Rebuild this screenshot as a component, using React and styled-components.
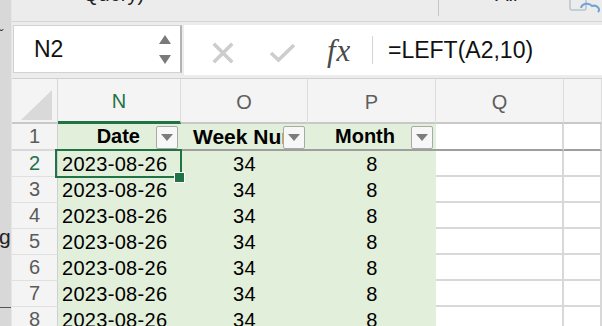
import styled, { createGlobalStyle } from "styled-components";

const GlobalStyle = createGlobalStyle`
  html, body {
    margin: 0;
    padding: 0;
    background: #ececec;
    overflow: hidden;
  }
  body {
    font-family: "Liberation Sans", Arial, sans-serif;
  }
`;

const COLS = "46px 123px 127px 128px 128px 1fr";
const GREEN = "#217346";
const TABLE_FILL = "#e2efda";

const rows = [2, 3, 4, 5, 6, 7, 8].map((n) => ({
  n,
  date: "2023-08-26",
  week: 34,
  month: 8,
}));

export default function App() {
  return (
    <>
      <GlobalStyle />
      <Window>
        <SideStrip>
          <Tick>ˇ</Tick>
          <SideGlyph>g</SideGlyph>
          <SideRule />
        </SideStrip>
        <Main>
          <Ribbon>
            <RibbonLabel $left={71}>Query)</RibbonLabel>
            <RibbonDivider />
            <RibbonLabel $left={56}>All</RibbonLabel>
            <RibbonIcon>
              <svg width="32" height="14" viewBox="0 0 32 14">
                <rect x="1" y="-6" width="16" height="16" rx="2" fill="none" stroke="#b8c4d0" strokeWidth="1.5" />
                <path d="M12 8 a6 5 0 0 1 11 -2 a5 4 0 0 1 6 6" fill="none" stroke="#6fa3d8" strokeWidth="2" />
              </svg>
            </RibbonIcon>
          </Ribbon>

          <FormulaBar>
            <NameBox>
              N2
              <Spinner>
                <svg width="14" height="32" viewBox="0 0 14 32">
                  <polygon points="7,2 13,11 1,11" fill="#7a7a7a" />
                  <polygon points="1,22 13,22 7,31" fill="#7a7a7a" />
                </svg>
              </Spinner>
            </NameBox>
            <FormulaInput>
              <BarIcon $ml={28}>
                <svg width="22" height="22" viewBox="0 0 22 22">
                  <path d="M3 3 L19 19 M19 3 L3 19" stroke="#cdcdcd" strokeWidth="3.6" strokeLinecap="square" />
                </svg>
              </BarIcon>
              <BarIcon $ml={35}>
                <svg width="27" height="21" viewBox="0 0 27 21">
                  <path d="M2 11 L9.5 18 L25 3" fill="none" stroke="#cdcdcd" strokeWidth="3.6" />
                </svg>
              </BarIcon>
              <Fx>fx</Fx>
              <FxDivider />
              <FormulaText>=LEFT(A2,10)</FormulaText>
            </FormulaInput>
          </FormulaBar>

          <Sheet>
            <HeaderRow>
              <Corner>
                <svg width="31" height="30" viewBox="0 0 31 30">
                  <polygon points="31,0 31,30 0,30" fill="#d9d9d9" />
                </svg>
              </Corner>
              <ColHead $active>N</ColHead>
              <ColHead>O</ColHead>
              <ColHead>P</ColHead>
              <ColHead>Q</ColHead>
              <ColHead />
            </HeaderRow>

            <Row $height={27}>
              <RowHead $first>1</RowHead>
              <TitleCell>
                <TitleLabel>Date</TitleLabel>
                <DropButton />
              </TitleCell>
              <TitleCell>
                <TitleLabel $clip>Week Number</TitleLabel>
                <DropButton />
              </TitleCell>
              <TitleCell>
                <TitleLabel>Month</TitleLabel>
                <DropButton />
              </TitleCell>
              <EmptyCell $first />
              <EmptyCell $first />
            </Row>

            {rows.map((r) => (
              <Row key={r.n} $height={26}>
                <RowHead $active={r.n === 2}>{r.n}</RowHead>
                <DataCell $align="left">
                  {r.date}
                  {r.n === 2 && (
                    <>
                      <SelectionFrame />
                      <FillHandle />
                    </>
                  )}
                </DataCell>
                <DataCell>{r.week}</DataCell>
                <DataCell>{r.month}</DataCell>
                <EmptyCell />
                <EmptyCell />
              </Row>
            ))}
          </Sheet>
        </Main>
      </Window>
    </>
  );
}

function DropButton() {
  return (
    <DropBox>
      <svg width="12" height="7" viewBox="0 0 12 7">
        <polygon points="0,0 12,0 6,7" fill="#7c7c7c" />
      </svg>
    </DropBox>
  );
}

const Window = styled.div`
  display: flex;
  width: 602px;
  height: 326px;
  overflow: hidden;
`;

const SideStrip = styled.div`
  width: 12px;
  flex-shrink: 0;
  background: #d8d8d8;
  border-right: 1px solid #e6e6e6;
  box-sizing: border-box;
  display: flex;
  flex-direction: column;
  overflow: hidden;
  color: #333;

  & > * {
    flex-shrink: 0;
  }
`;

const Tick = styled.span`
  margin-top: 28px;
  font-size: 14px;
  line-height: 14px;
  margin-left: -1px;
`;

const SideGlyph = styled.span`
  margin-top: 184px;
  font-size: 21px;
  line-height: 22px;
  margin-left: -1px;
  color: #222;
`;

const SideRule = styled.div`
  margin-top: 59px;
  height: 1px;
  background: #555;
`;

const Main = styled.div`
  flex: 1;
  display: flex;
  flex-direction: column;
  min-width: 0;

  & > * {
    flex-shrink: 0;
  }
`;

const Ribbon = styled.div`
  height: 22px;
  box-sizing: border-box;
  border-bottom: 1px solid #d6d6d6;
  display: flex;
  align-items: flex-start;
  overflow: hidden;
  background: #ececec;

  & > * {
    flex-shrink: 0;
  }
`;

const RibbonLabel = styled.span`
  margin-left: ${(p) => p.$left}px;
  margin-top: -17px;
  font-size: 20px;
  line-height: 23px;
  color: #222;
  white-space: nowrap;
`;

const RibbonDivider = styled.div`
  margin-left: 294px;
  width: 1px;
  height: 16px;
  background: #c4c4c4;
`;

const RibbonIcon = styled.div`
  margin-left: 52px;
  display: flex;
`;

const FormulaBar = styled.div`
  height: 56px;
  box-sizing: border-box;
  padding: 3px 0 0 1px;
  display: flex;
  align-items: flex-start;
  gap: 2px;
  background: #ececec;
`;

const NameBox = styled.div`
  width: 169px;
  height: 48px;
  flex-shrink: 0;
  box-sizing: border-box;
  background: #fff;
  border: 1px solid #d2d2d2;
  border-right: 2px solid #b4b4b4;
  display: flex;
  align-items: center;
  padding-left: 20px;
  font-size: 23px;
  color: #111;
`;

const Spinner = styled.div`
  margin-left: auto;
  margin-right: 8px;
  display: flex;
`;

const FormulaInput = styled.div`
  flex: 1;
  height: 50px;
  background: #fff;
  display: flex;
  align-items: center;
  overflow: hidden;

  & > * {
    flex-shrink: 0;
  }
`;

const BarIcon = styled.div`
  margin-left: ${(p) => p.$ml}px;
  margin-top: 5px;
  display: flex;
`;

const Fx = styled.span`
  margin-left: 31px;
  margin-top: 2px;
  width: 30px;
  font-family: "Liberation Serif", "DejaVu Serif", serif;
  font-style: italic;
  font-size: 31px;
  color: #4a4a4a;
  letter-spacing: 1px;
`;

const FxDivider = styled.div`
  margin-left: 15px;
  width: 1px;
  height: 28px;
  background: #d4d4d4;
`;

const FormulaText = styled.span`
  margin-left: 15px;
  font-size: 23px;
  color: #111;
  white-space: nowrap;
`;

const Sheet = styled.div`
  display: flex;
  flex-direction: column;
  background: #fff;
  border-top: 1px solid #d0d0d0;

  & > * {
    flex-shrink: 0;
  }
`;

const Row = styled.div`
  display: grid;
  grid-template-columns: ${COLS};
  height: ${(p) => p.$height}px;
  font-size: 20px;
`;

const HeaderRow = styled(Row)`
  height: 45px;
`;

const Corner = styled.div`
  background: #f4f4f4;
  border-right: 1px solid #d6d6d6;
  border-bottom: 2px solid #c8c8c8;
  display: flex;
  align-items: flex-end;
  justify-content: flex-end;
  padding: 0 5px 2px 0;
`;

const ColHead = styled.div`
  background: #f4f4f4;
  border-right: 1px solid #dddddd;
  border-bottom: ${(p) => (p.$active ? `3px solid ${GREEN}` : "2px solid #c8c8c8")};
  display: flex;
  align-items: center;
  justify-content: center;
  color: ${(p) => (p.$active ? GREEN : "#5e5e5e")};
  font-size: 20px;
  padding-top: 3px;
`;

const RowHead = styled.div`
  background: #f4f4f4;
  border-right: 1px solid #cfcfcf;
  border-bottom: ${(p) => (p.$first ? "2px solid #d8d8d8" : "1px solid #e0e0e0")};
  display: flex;
  align-items: center;
  justify-content: center;
  color: ${(p) => (p.$active ? GREEN : "#5a5a5a")};
  font-size: 20px;
`;

const TitleCell = styled.div`
  background: ${TABLE_FILL};
  border-bottom: 2px solid #9e9e9e;
  display: flex;
  align-items: center;
  justify-content: flex-end;
  min-width: 0;
  padding-right: 3px;
  font-weight: 700;
  color: #000;
`;

const TitleLabel = styled.span`
  white-space: nowrap;
  overflow: hidden;
  padding-right: ${(p) => (p.$clip ? "0" : "16px")};
  padding-left: ${(p) => (p.$clip ? "12px" : "0")};
  flex: ${(p) => (p.$clip ? "1" : "none")};
  font-size: ${(p) => (p.$clip ? "21px" : "20px")};
  text-overflow: clip;
`;

const DropBox = styled.div`
  width: 22px;
  height: 23px;
  flex-shrink: 0;
  box-sizing: border-box;
  border: 1px solid #a9a9a9;
  border-radius: 2px;
  background: #f7f7f7;
  display: flex;
  align-items: center;
  justify-content: center;
  margin-top: 1px;
`;

const DataCell = styled.div`
  position: relative;
  background: ${TABLE_FILL};
  display: flex;
  align-items: center;
  justify-content: ${(p) => (p.$align === "left" ? "flex-start" : "center")};
  padding-left: ${(p) => (p.$align === "left" ? "4px" : "0")};
  color: #000;
  letter-spacing: 0.3px;
`;

const EmptyCell = styled.div`
  background: #fff;
  border-right: 2px solid #d8d8d8;
  border-bottom: ${(p) => (p.$first ? "2px solid #9e9e9e" : "2px solid #d8d8d8")};
`;

const SelectionFrame = styled.div`
  position: absolute;
  z-index: 2;
  top: -2px;
  left: -3px;
  right: -1px;
  bottom: -1px;
  border: 2px solid ${GREEN};
  pointer-events: none;
`;

const FillHandle = styled.div`
  position: absolute;
  z-index: 3;
  right: -4px;
  bottom: -6px;
  width: 9px;
  height: 9px;
  background: ${GREEN};
  border: 1px solid #fff;
`;
